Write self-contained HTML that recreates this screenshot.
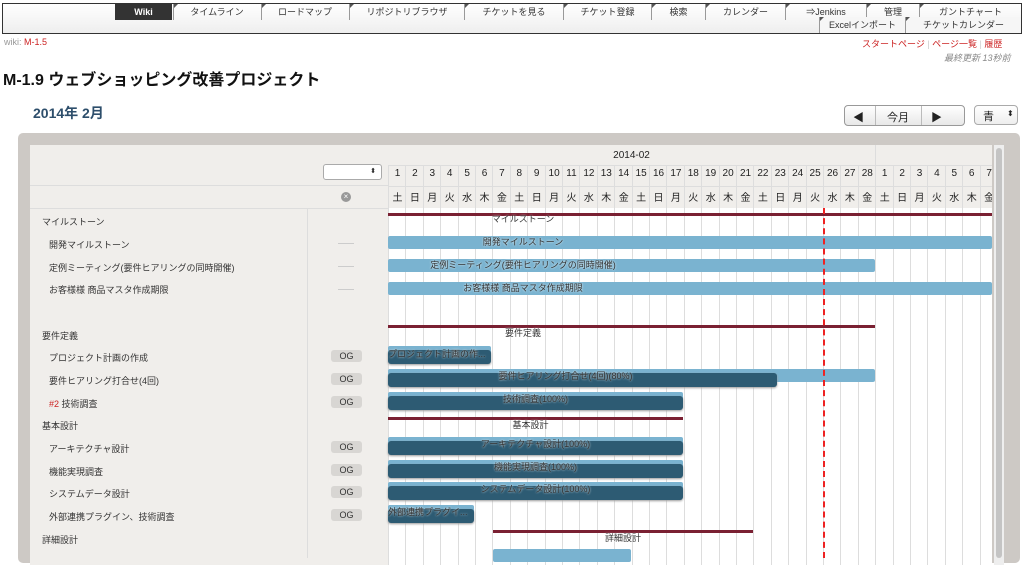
<!DOCTYPE html>
<html><head><meta charset="utf-8">
<style>
*{box-sizing:border-box;margin:0;padding:0}
body{width:1024px;height:553px;overflow:hidden;background:#fff;font-family:"Liberation Sans","Noto Sans CJK JP",sans-serif;position:relative;color:#222}
.a{position:absolute;white-space:nowrap}
#nav{position:absolute;left:2px;top:3px;width:1020px;height:31px;border:1px solid #333;background:linear-gradient(#fff,#eee)}
.tab{position:absolute;height:16px;font-size:9px;text-align:center;line-height:16px;color:#333;border-left:1px solid #999}
.tab:before{content:"";position:absolute;left:0;top:0;border-left:4px solid #555;border-bottom:4px solid transparent}
#wiki{background:#333;color:#fff;font-weight:bold;border:none}
#wiki:before{display:none}
.lbl{font-size:9px;color:#333}
.og{position:absolute;left:331px;width:31px;height:12px;background:#d8d6d3;border-radius:3px;font-size:9px;text-align:center;line-height:12px;color:#333}
.dash{position:absolute;left:338px;width:16px;height:1px;background:#ccc}
.lb{position:absolute;height:13px;background:#7ab3d0;border-radius:2px}
.db{position:absolute;background:#2d5b73;border-radius:3px;box-shadow:0 1px 2px #999}
.bt{position:absolute;font-size:9px;color:#333;text-align:center;line-height:13px;text-shadow:0 0 2px #fff}
.ms{position:absolute;height:3px;background:#7a2032}
</style></head><body>
<div id="nav">
<div class="tab" id="wiki" style="left:112px;top:0;width:57px">Wiki</div>
<div class="tab" style="left:170px;top:0;width:87px">タイムライン</div>
<div class="tab" style="left:258px;top:0;width:87px">ロードマップ</div>
<div class="tab" style="left:346px;top:0;width:115px">リポジトリブラウザ</div>
<div class="tab" style="left:461px;top:0;width:99px">チケットを見る</div>
<div class="tab" style="left:560px;top:0;width:88px">チケット登録</div>
<div class="tab" style="left:648px;top:0;width:54px">検索</div>
<div class="tab" style="left:702px;top:0;width:80px">カレンダー</div>
<div class="tab" style="left:782px;top:0;width:81px">⇒Jenkins</div>
<div class="tab" style="left:863px;top:0;width:53px">管理</div>
<div class="tab" style="left:916px;top:0;width:102px">ガントチャート</div>
<div class="tab" style="left:816px;top:13px;width:86px;background:#f6f6f6">Excelインポート</div>
<div class="tab" style="left:902px;top:13px;width:116px;background:#f6f6f6">チケットカレンダー</div>
</div>
<div class="a" style="left:4px;top:37px;font-size:9px;color:#999">wiki: <span style="color:#c22">M-1.5</span></div>
<div class="a" style="left:862px;top:37px;font-size:9px;color:#c22">スタートページ <span style="color:#ccc">|</span> ページ一覧 <span style="color:#ccc">|</span> 履歴</div>
<div class="a" style="left:944px;top:51px;font-size:9px;color:#888;font-style:italic">最終更新 13秒前</div>
<div class="a" style="left:3px;top:66px;font-size:16px;font-weight:bold;color:#111">M-1.9 ウェブショッピング改善プロジェクト</div>
<div class="a" style="left:33px;top:103px;font-size:14px;font-weight:bold;color:#2d4e6b">2014年 2月</div>
<div class="a" style="left:844px;top:105px;width:121px;height:21px;border:1px solid #999;border-radius:4px;background:linear-gradient(#fff,#e8e8e8);font-size:11px">
<span class="a" style="left:8px;top:3px">◀</span><span class="a" style="left:30px;top:0;width:1px;height:19px;background:#bbb"></span><span class="a" style="left:42px;top:3px">今月</span><span class="a" style="left:76px;top:0;width:1px;height:19px;background:#bbb"></span><span class="a" style="left:86px;top:3px">▶</span></div>
<div class="a" style="left:974px;top:105px;width:44px;height:20px;border:1px solid #aaa;border-radius:4px;background:linear-gradient(#fff,#eee);font-size:11px"><span class="a" style="left:8px;top:2px">青</span><span class="a" style="left:32px;top:3px;font-size:8px">⬍</span></div>

<div class="a" style="left:18px;top:133px;width:1002px;height:430px;background:#cdc9c5;border-radius:5px"></div>
<div class="a" style="left:30px;top:145px;width:358px;height:420px;background:#f0eeeb"></div>
<div class="a" style="left:30px;top:185px;width:358px;height:1px;background:#ddd"></div>
<div class="a" style="left:30px;top:208px;width:358px;height:1px;background:#ddd"></div>
<div class="a" style="left:307px;top:208px;width:1px;height:350px;background:#ddd"></div>
<div class="a" style="left:323px;top:164px;width:59px;height:16px;border:1px solid #aaa;border-radius:3px;background:#fff;font-size:7px;text-align:right;padding-right:5px;line-height:14px">⬍</div>
<div class="a" style="left:341px;top:192px;width:10px;height:10px;border-radius:5px;background:#999;color:#fff;font-size:8px;text-align:center;line-height:10px">×</div>
<div id="chart" class="a" style="left:388px;top:145px;width:604px;height:420px;background:#fff;overflow:hidden"></div>
<div class="a" style="left:994px;top:145px;width:10px;height:420px;background:#eee"></div>
<div class="a" style="left:996px;top:148px;width:6px;height:410px;background:#c4c4c4;border-radius:3px"></div>

<div class="a lbl" style="left:42px;top:215px">マイルストーン</div>
<div class="a lbl" style="left:49px;top:238px">開発マイルストーン</div><div class="dash" style="top:243px"></div>
<div class="a lbl" style="left:49px;top:261px">定例ミーティング(要件ヒアリングの同時開催)</div><div class="dash" style="top:266px"></div>
<div class="a lbl" style="left:49px;top:283px">お客様様 商品マスタ作成期限</div><div class="dash" style="top:289px"></div>
<div class="a lbl" style="left:42px;top:329px">要件定義</div>
<div class="a lbl" style="left:49px;top:351px">プロジェクト計画の作成</div><div class="og" style="top:350px">OG</div>
<div class="a lbl" style="left:49px;top:374px">要件ヒアリング打合せ(4回)</div><div class="og" style="top:373px">OG</div>
<div class="a lbl" style="left:49px;top:397px"><span style="color:#c22">#2</span> 技術調査</div><div class="og" style="top:396px">OG</div>
<div class="a lbl" style="left:42px;top:419px">基本設計</div>
<div class="a lbl" style="left:49px;top:442px">アーキテクチャ設計</div><div class="og" style="top:441px">OG</div>
<div class="a lbl" style="left:49px;top:465px">機能実現調査</div><div class="og" style="top:464px">OG</div>
<div class="a lbl" style="left:49px;top:487px">システムデータ設計</div><div class="og" style="top:486px">OG</div>
<div class="a lbl" style="left:49px;top:510px">外部連携プラグイン、技術調査</div><div class="og" style="top:509px">OG</div>
<div class="a lbl" style="left:42px;top:533px">詳細設計</div>

<script>
var c=document.getElementById('chart'),h='',w=17.4,wd='土日月火水木金';
h+='<div class="a" style="left:0;top:0;width:604px;height:63px;background:#f0eeeb"></div>';
h+='<div class="a" style="left:0;top:5px;width:487px;text-align:center;font-size:10px">2014-02</div>';
h+='<div class="a" style="left:487px;top:0;width:1px;height:20px;background:#ddd"></div>';
h+='<div class="a" style="left:0;top:20px;width:604px;height:1px;background:#ddd"></div>';
h+='<div class="a" style="left:0;top:41px;width:604px;height:1px;background:#ddd"></div>';
for(var i=0;i<35;i++){var x=i*w,d=i<28?i+1:i-27;
h+='<div class="a" style="left:'+x.toFixed(1)+'px;top:20px;width:1px;height:400px;background:#ddd"></div>';
h+='<div class="a" style="left:'+(x+1).toFixed(1)+'px;top:23px;width:17px;text-align:center;font-size:10px">'+d+'</div>';
h+='<div class="a" style="left:'+(x+1).toFixed(1)+'px;top:44px;width:17px;text-align:center;font-size:10px">'+wd[i%7]+'</div>';}
c.innerHTML=h;
</script>
<div class="ms" style="left:388px;top:213px;width:604px"></div><div class="bt" style="left:388px;top:213px;width:270px">マイルストーン</div>
<div class="lb" style="left:388px;top:236px;width:604px"></div><div class="bt" style="left:388px;top:236px;width:270px">開発マイルストーン</div>
<div class="lb" style="left:388px;top:259px;width:487px"></div><div class="bt" style="left:388px;top:259px;width:270px">定例ミーティング(要件ヒアリングの同時開催)</div>
<div class="lb" style="left:388px;top:282px;width:604px"></div><div class="bt" style="left:388px;top:282px;width:270px">お客様様 商品マスタ作成期限</div>
<div class="ms" style="left:388px;top:325px;width:487px"></div><div class="bt" style="left:388px;top:327px;width:270px">要件定義</div>
<div class="lb" style="left:388px;top:346px;width:103px"></div><div class="db" style="left:388px;top:350px;width:103px;height:14px"></div><div class="bt" style="left:388px;top:348px;text-align:left">プロジェクト計画の作...</div>
<div class="lb" style="left:388px;top:369px;width:487px"></div><div class="db" style="left:388px;top:373px;width:389px;height:14px"></div><div class="bt" style="left:388px;top:370px;width:355px">要件ヒアリング打合せ(4回)(80%)</div>
<div class="lb" style="left:388px;top:392px;width:295px"></div><div class="db" style="left:388px;top:396px;width:295px;height:14px"></div><div class="bt" style="left:388px;top:393px;width:295px">技術調査(100%)</div>
<div class="ms" style="left:388px;top:417px;width:295px"></div><div class="bt" style="left:388px;top:419px;width:285px">基本設計</div>
<div class="lb" style="left:388px;top:437px;width:295px"></div><div class="db" style="left:388px;top:441px;width:295px;height:14px"></div><div class="bt" style="left:388px;top:438px;width:295px">アーキテクチャ設計(100%)</div>
<div class="lb" style="left:388px;top:460px;width:295px"></div><div class="db" style="left:388px;top:464px;width:295px;height:14px"></div><div class="bt" style="left:388px;top:461px;width:295px">機能実現調査(100%)</div>
<div class="lb" style="left:388px;top:482px;width:295px"></div><div class="db" style="left:388px;top:486px;width:295px;height:14px"></div><div class="bt" style="left:388px;top:483px;width:295px">システムデータ設計(100%)</div>
<div class="lb" style="left:388px;top:505px;width:86px"></div><div class="db" style="left:388px;top:509px;width:86px;height:14px"></div><div class="bt" style="left:388px;top:506px;text-align:left">外部連携プラグイ...</div>
<div class="ms" style="left:493px;top:530px;width:260px"></div><div class="bt" style="left:493px;top:532px;width:260px">詳細設計</div>
<div class="lb" style="left:493px;top:549px;width:138px"></div>
<div class="a" style="left:823px;top:208px;width:0;height:350px;border-left:2px dashed #e22"></div>
</body></html>
